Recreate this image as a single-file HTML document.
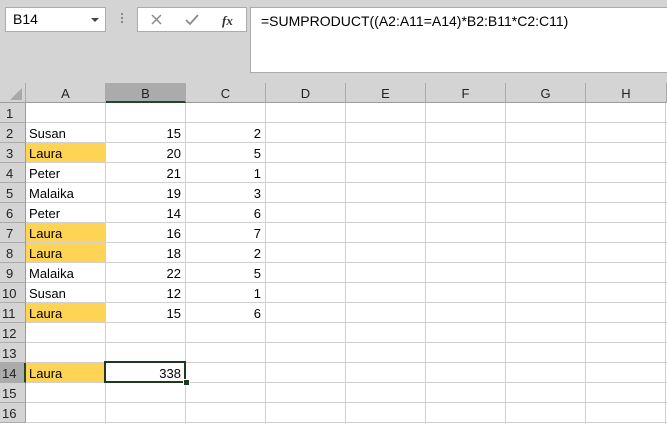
<!DOCTYPE html>
<html><head><style>
body{margin:0;width:667px;height:424px;overflow:hidden;background:#fff;font-family:"Liberation Sans",sans-serif;position:relative}
.top{position:absolute;left:0;top:0;width:667px;height:83px;background:#d4d4d4}
.nb{position:absolute;left:5px;top:7px;width:101px;height:25px;background:#fff;border:1px solid #ababab;box-sizing:border-box;font-size:14px;line-height:23px;padding-left:7px}
.nb .ar{position:absolute;right:6px;top:10px;width:0;height:0;border-left:4px solid transparent;border-right:4px solid transparent;border-top:4px solid #444}
.dots{position:absolute;left:121px;top:13px;width:2px;height:12px;background:repeating-linear-gradient(#888 0 2px,transparent 2px 4px)}
.fb{position:absolute;left:137px;top:7px;width:110px;height:25px;background:#fff;border:1px solid #ababab;box-sizing:border-box}
.fx{position:absolute;left:250px;top:7px;width:420px;height:66px;background:#fff;border:1px solid #ababab;box-sizing:border-box;font-size:14px;padding:5px 0 0 10px}
.hdr{position:absolute;top:83px;height:20px;background:#d4d4d4;border-right:1px solid #ababab;border-bottom:1px solid #9b9b9b;box-sizing:border-box;text-align:center;font-size:13px;line-height:21px;color:#222}
.rh{position:absolute;left:0;width:26px;height:20px;background:#d4d4d4;border-bottom:1px solid #ababab;border-right:1px solid #9b9b9b;box-sizing:border-box;font-size:13px;line-height:21px;padding-left:6px;color:#222}
.grid{position:absolute;left:26px;top:103px;width:641px;height:321px;background-image:linear-gradient(to right,#d0d0d0 1px,transparent 1px),linear-gradient(#d0d0d0 1px,transparent 1px);background-size:80px 20px;background-position:-1px -1px}
.c{position:absolute;height:19px;font-size:13px;line-height:21px;color:#000}
.y{background:#ffd454}
.l{padding-left:3px;width:76px}
.r{text-align:right;width:76px}
</style></head><body>
<div class="top"></div>
<div class="nb">B14<div class="ar"></div></div>
<div class="dots"></div>
<div class="fb">
<svg width="110" height="24" style="position:absolute;left:0;top:0">
<path d="M14 7l9 9M23 7l-9 9" stroke="#8a8a8a" stroke-width="1.5"/>
<path d="M48 12l4 4 8-9" stroke="#8a8a8a" stroke-width="1.8" fill="none"/>
<text x="84" y="17" font-family="Liberation Serif" font-style="italic" font-weight="bold" font-size="13" fill="#333">fx</text>
</svg></div>
<div class="fx">=SUMPRODUCT((A2:A11=A14)*B2:B11*C2:C11)</div>
<div class="hdr" style="left:0;width:26px"><svg width="26" height="20" style="position:absolute;left:0;top:0"><path d="M22 5L22 17L10 17Z" fill="#a8a8a8"/></svg></div>
<div class="hdr" style="left:26px;width:80px">A</div>
<div class="hdr" style="left:106px;width:80px;background:#ababab;border-bottom:2px solid #1e4a2a">B</div>
<div class="hdr" style="left:186px;width:80px">C</div>
<div class="hdr" style="left:266px;width:80px">D</div>
<div class="hdr" style="left:346px;width:80px">E</div>
<div class="hdr" style="left:426px;width:80px">F</div>
<div class="hdr" style="left:506px;width:80px">G</div>
<div class="hdr" style="left:586px;width:81px">H</div>
<div class="grid"></div>
<div class="rh" style="top:103px">1</div><div class="rh" style="top:123px">2</div><div class="rh" style="top:143px">3</div><div class="rh" style="top:163px">4</div><div class="rh" style="top:183px">5</div><div class="rh" style="top:203px">6</div><div class="rh" style="top:223px">7</div><div class="rh" style="top:243px">8</div><div class="rh" style="top:263px">9</div><div class="rh" style="top:283px;padding-left:2px">10</div><div class="rh" style="top:303px;padding-left:2px">11</div><div class="rh" style="top:323px;padding-left:2px">12</div><div class="rh" style="top:343px;padding-left:2px">13</div><div class="rh" style="top:363px;padding-left:2px;background:#ababab;border-right:2px solid #1e4a2a">14</div><div class="rh" style="top:383px;padding-left:2px">15</div><div class="rh" style="top:403px;padding-left:2px">16</div>

<div class="c l" style="left:26px;top:123px">Susan</div><div class="c r" style="left:105px;top:123px">15</div><div class="c r" style="left:185px;top:123px">2</div>
<div class="c l y" style="left:26px;top:143px">Laura</div><div class="c r" style="left:105px;top:143px">20</div><div class="c r" style="left:185px;top:143px">5</div>
<div class="c l" style="left:26px;top:163px">Peter</div><div class="c r" style="left:105px;top:163px">21</div><div class="c r" style="left:185px;top:163px">1</div>
<div class="c l" style="left:26px;top:183px">Malaika</div><div class="c r" style="left:105px;top:183px">19</div><div class="c r" style="left:185px;top:183px">3</div>
<div class="c l" style="left:26px;top:203px">Peter</div><div class="c r" style="left:105px;top:203px">14</div><div class="c r" style="left:185px;top:203px">6</div>
<div class="c l y" style="left:26px;top:223px">Laura</div><div class="c r" style="left:105px;top:223px">16</div><div class="c r" style="left:185px;top:223px">7</div>
<div class="c l y" style="left:26px;top:243px">Laura</div><div class="c r" style="left:105px;top:243px">18</div><div class="c r" style="left:185px;top:243px">2</div>
<div class="c l" style="left:26px;top:263px">Malaika</div><div class="c r" style="left:105px;top:263px">22</div><div class="c r" style="left:185px;top:263px">5</div>
<div class="c l" style="left:26px;top:283px">Susan</div><div class="c r" style="left:105px;top:283px">12</div><div class="c r" style="left:185px;top:283px">1</div>
<div class="c l y" style="left:26px;top:303px">Laura</div><div class="c r" style="left:105px;top:303px">15</div><div class="c r" style="left:185px;top:303px">6</div>
<div class="c l y" style="left:26px;top:363px">Laura</div>
<div style="position:absolute;left:104px;top:361px;width:82px;height:22px;border:2px solid #1e3a1e;box-sizing:border-box"></div>
<div class="c r" style="left:105px;top:363px">338</div>
<div style="position:absolute;left:183px;top:379px;width:5px;height:5px;background:#1e3a1e;border:1px solid #fff"></div>
</body></html>
